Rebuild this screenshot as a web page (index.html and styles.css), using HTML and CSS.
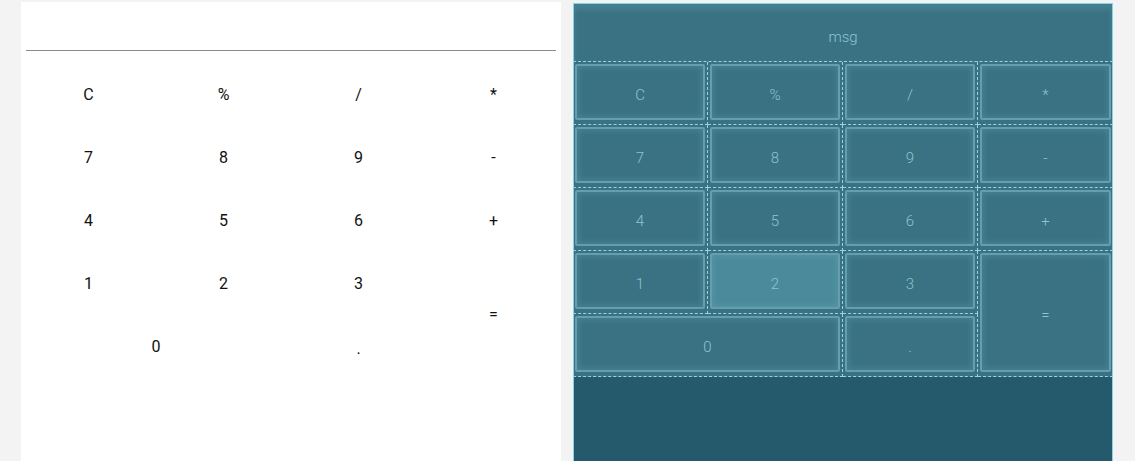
FILE: index.html
```html
<!DOCTYPE html>
<html>
<head>
<meta charset="utf-8">
<link rel="stylesheet" href="styles.css">
</head>
<body>
<div class="stage">
  <div class="design">
    <div class="edit"></div>
    <div class="keys">
      <div class="key">C</div>
      <div class="key">%</div>
      <div class="key">/</div>
      <div class="key">*</div>
      <div class="key">7</div>
      <div class="key">8</div>
      <div class="key">9</div>
      <div class="key">-</div>
      <div class="key">4</div>
      <div class="key">5</div>
      <div class="key">6</div>
      <div class="key">+</div>
      <div class="key">1</div>
      <div class="key">2</div>
      <div class="key">3</div>
      <div class="key tall">=</div>
      <div class="key wide">0</div>
      <div class="key dot">.</div>
    </div>
  </div>
  <div class="blue">
    <div class="msg"><span>msg</span></div>
    <div class="bkeys">
      <div class="cell"><div class="btn">C</div></div>
      <div class="cell"><div class="btn">%</div></div>
      <div class="cell"><div class="btn">/</div></div>
      <div class="cell"><div class="btn">*</div></div>
      <div class="cell"><div class="btn">7</div></div>
      <div class="cell"><div class="btn">8</div></div>
      <div class="cell"><div class="btn">9</div></div>
      <div class="cell"><div class="btn">-</div></div>
      <div class="cell"><div class="btn">4</div></div>
      <div class="cell"><div class="btn">5</div></div>
      <div class="cell"><div class="btn">6</div></div>
      <div class="cell"><div class="btn">+</div></div>
      <div class="cell"><div class="btn">1</div></div>
      <div class="cell"><div class="btn hot">2</div></div>
      <div class="cell"><div class="btn">3</div></div>
      <div class="cell tall"><div class="btn">=</div></div>
      <div class="cell wide"><div class="btn">0</div></div>
      <div class="cell"><div class="btn">.</div></div>
    </div>
  </div>
</div>
</body>
</html>
```
FILE: styles.css
```css
html, body {
  margin: 0;
  padding: 0;
  background: #f3f3f3;
  overflow: hidden;
}
.stage {
  display: flex;
  gap: 12px;
  padding: 2px 0 0 21px;
  height: 461px;
  box-sizing: border-box;
}
.design {
  width: 540px;
  height: 459px;
  background: #ffffff;
}
.edit {
  height: 48px;
  margin: 0 5px;
  border-bottom: 1px solid #8a8a8a;
}
.keys {
  margin-top: 11px;
  display: grid;
  grid-template-columns: repeat(4, 135px);
  grid-template-rows: repeat(5, 63px);
}
.key {
  display: flex;
  align-items: center;
  justify-content: center;
  padding-top: 1px;
  font-family: Roboto, "Liberation Sans", sans-serif;
  font-weight: 400;
  font-size: 16px;
  color: #111111;
}
.key.dot {
  padding-top: 5px;
}
.tall {
  grid-column: 4;
  grid-row: 4 / span 2;
}
.wide {
  grid-column: 1 / span 2;
}
.blue {
  width: 540px;
  height: 459px;
  margin-top: 1px;
  background: #245a6b;
  outline: 1px solid #86d3e2;
  outline-offset: -1px;
}
.msg {
  height: 59px;
  box-sizing: border-box;
  background: #3a7283;
  box-shadow: inset 6px 11px 4px -4px #44808f, inset -4px 0 4px -2px #44808f;
  display: flex;
  align-items: center;
  justify-content: center;
  padding-top: 9px;
  font-family: Roboto, "Liberation Sans", sans-serif;
  font-weight: 300;
  font-size: 15px;
  color: #8cc4d1;
}
.bkeys {
  display: grid;
  grid-template-columns: repeat(4, 135px);
  grid-template-rows: repeat(5, 63px);
  border-top: 1px dashed #95d4e2;
  margin-top: -1px;
}
.cell {
  box-sizing: border-box;
  background: #3a7283;
  border-right: 1px dashed #95d4e2;
  border-bottom: 1px dashed #95d4e2;
  padding: 2px 2px 4px 2px;
  display: flex;
}
.cell:nth-child(4n), .cell.tall {
  border-right: none;
}
.btn {
  flex: 1;
  border: 2px solid #659fae;
  border-radius: 2px;
  box-shadow: inset 0 0 6px 1px #4a8595;
  display: flex;
  align-items: center;
  justify-content: center;
  font-family: Roboto, "Liberation Sans", sans-serif;
  font-weight: 300;
  font-size: 15px;
  color: #8cc4d1;
  padding-top: 5px;
}
.btn.hot {
  background: #4a8a9b;
  box-shadow: inset 0 0 6px 1px #5796a6;
}
```
